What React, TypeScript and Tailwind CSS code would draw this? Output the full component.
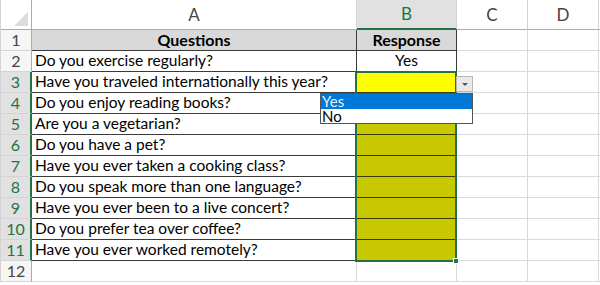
import React from 'react';

const questions = [
  'Do you exercise regularly?',
  'Have you traveled internationally this year?',
  'Do you enjoy reading books?',
  'Are you a vegetarian?',
  'Do you have a pet?',
  'Have you ever taken a cooking class?',
  'Do you speak more than one language?',
  'Have you ever been to a live concert?',
  'Do you prefer tea over coffee?',
  'Have you ever worked remotely?',
];

const font = { fontFamily: 'Lato, "Open Sans", sans-serif' };

const ColHeader = ({ label, active = false }: { label: string; active?: boolean }) => (
  <div
    className={`h-[30px] flex items-center justify-center text-[17px] border-r border-[#d4d4d4] ${
      active
        ? 'bg-[#e1e1e1] text-[#217346] border-b-2 border-b-[#217346]'
        : 'bg-white text-[#444] border-b border-b-[#ababab]'
    }`}
  >
    {label}
  </div>
);

const RowHeader = ({ n, active = false }: { n: number; active?: boolean }) => (
  <div
    className={`h-[21px] flex items-center justify-center text-[16px] border-b border-[#d4d4d4] ${
      active
        ? 'bg-[#e1e1e1] text-[#217346] border-r-2 border-r-[#217346]'
        : 'bg-[#f6f6f6] text-[#444] border-r border-r-[#ababab]'
    }`}
  >
    {n}
  </div>
);

const Blank = () => <div className="h-[21px] border-r border-b border-[#d9d9d9] bg-white" />;

export default function App() {
  const rows: React.ReactNode[] = [];

  // row 1 - table headings
  rows.push(
    <React.Fragment key="r1">
      <RowHeader n={1} />
      <div className="h-[21px] bg-[#d9d9d9] border-r border-b border-[#3a3a3a] flex items-center justify-center font-bold text-[16px] text-black">
        Questions
      </div>
      <div className="h-[21px] bg-[#d9d9d9] border-r border-b border-[#3a3a3a] flex items-center justify-center font-bold text-[16px] text-black">
        Response
      </div>
      <Blank />
      <Blank />
      <div className="h-[21px] border-b border-[#d9d9d9]" />
    </React.Fragment>
  );

  questions.forEach((q, i) => {
    const n = i + 2;
    let bCls = 'bg-white';
    let bText = '';
    if (n === 2) bText = 'Yes';
    else if (n === 3) bCls = 'bg-[#ffff00]';
    else bCls = 'bg-[#c8c800]';
    rows.push(
      <React.Fragment key={n}>
        <RowHeader n={n} active={n >= 3} />
        <div className="h-[21px] border-r border-b border-[#3a3a3a] bg-white flex items-center pl-[3px] text-[15.5px] text-black whitespace-nowrap">
          {q}
        </div>
        <div
          className={`h-[21px] border-r border-b ${n >= 3 ? 'border-[#3b3b00]' : 'border-[#3a3a3a]'} ${bCls} flex items-center justify-center text-[15.5px] text-black`}
        >
          {bText}
        </div>
        <Blank />
        <Blank />
        <div className="h-[21px] border-b border-[#d9d9d9]" />
      </React.Fragment>
    );
  });

  rows.push(
    <React.Fragment key="r12">
      <RowHeader n={12} />
      <Blank />
      <Blank />
      <Blank />
      <Blank />
      <div className="h-[21px] border-b border-[#d9d9d9]" />
    </React.Fragment>
  );

  return (
    <div className="w-[600px] h-[285px] bg-white overflow-hidden relative" style={font}>
      <div className="grid grid-cols-[31px_325px_100px_71px_71px_2px] border-l border-[#d4d4d4]">
        {/* corner */}
        <div className="h-[30px] bg-white border-r border-b border-[#ababab] relative">
          <div className="absolute right-[3px] bottom-[3px] w-0 h-0 border-l-[14px] border-l-transparent border-b-[14px] border-b-[#dcdcdc]" />
        </div>
        <ColHeader label="A" />
        <ColHeader label="B" active />
        <ColHeader label="C" />
        <ColHeader label="D" />
        <div className="h-[30px] border-b border-[#ababab]" />
        {rows}
      </div>

      {/* selection outline B3:B11 */}
      <div className="absolute left-[355px] top-[71px] w-[102px] h-[191px] border-2 border-[#217346] pointer-events-none" />
      <div className="absolute left-[453px] top-[258px] w-[6px] h-[6px] bg-[#217346] border border-white" />

      {/* dropdown button */}
      <div className="absolute left-[456px] top-[76px] w-[17px] h-[16px] bg-[#e9e9e9] border border-[#b5b5b5] flex items-center justify-center">
        <div className="w-0 h-0 border-l-[3px] border-r-[3px] border-t-[3px] border-l-transparent border-r-transparent border-t-[#555]" />
      </div>

      {/* dropdown list */}
      <div className="absolute left-[320px] top-[93px] w-[153px] h-[31px] bg-white border border-[#555] text-[15px] leading-none">
        <div className="h-[15px] bg-[#0078d7] text-[#e6f0ff] flex items-center pl-[1px]">Yes</div>
        <div className="h-[14px] text-black flex items-center pl-[1px]">No</div>
      </div>
    </div>
  );
}
